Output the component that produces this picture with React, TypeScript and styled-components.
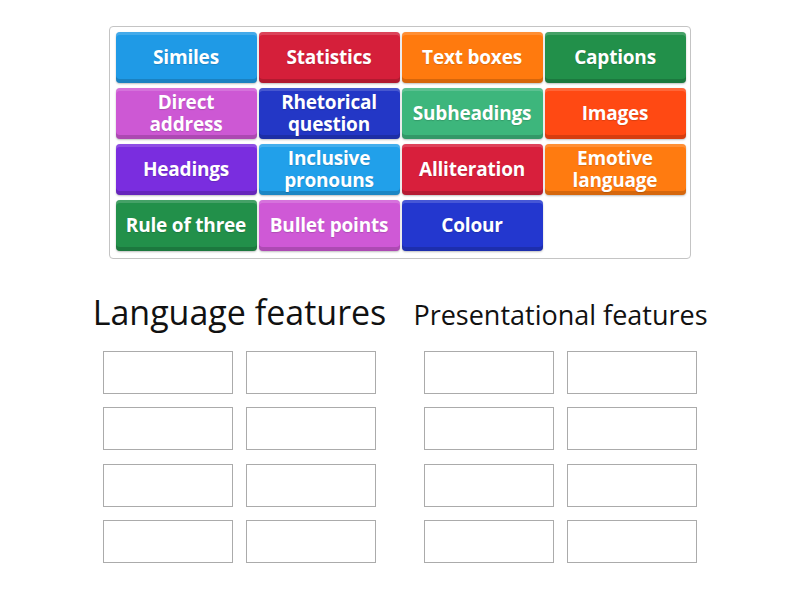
import React from "react";
import styled, { createGlobalStyle } from "styled-components";

const GlobalStyle = createGlobalStyle`
  html, body { margin: 0; padding: 0; background: #ffffff; }
  body { font-family: "Open Sans", "Liberation Sans", sans-serif; }
`;

const Page = styled.div`
  width: 800px;
  height: 600px;
  padding-top: 26px;
  box-sizing: border-box;
  display: flex;
  flex-direction: column;
  align-items: center;
`;

const Bank = styled.div`
  width: 582px;
  margin-left: -1px;
  box-sizing: border-box;
  border: 1px solid #c4c4c4;
  border-radius: 4px;
  padding: 5px 3px 7px 6px;
  display: grid;
  grid-template-columns: repeat(4, 141px);
  grid-auto-rows: 51px;
  column-gap: 2px;
  row-gap: 5px;
`;

const Tile = styled.div<{ $c: string }>`
  background: ${(p) => p.$c};
  border-radius: 4px;
  box-shadow: inset 0 3px 0 rgba(255, 255, 255, 0.16),
    inset 0 -4px 0 rgba(0, 0, 0, 0.16), 0 1px 2px rgba(0, 0, 0, 0.25);
  color: #ffffff;
  font-weight: 700;
  font-size: 19px;
  line-height: 22px;
  letter-spacing: -0.2px;
  text-align: center;
  display: flex;
  align-items: center;
  justify-content: center;
  padding: 0 1px 1px;
  text-shadow: 0 1px 1px rgba(0, 0, 0, 0.15);
  white-space: pre-line;
`;

const Groups = styled.div`
  margin-top: 33px;
  display: grid;
  grid-template-columns: 321px 321px;
`;

const Group = styled.div`
  display: flex;
  flex-direction: column;
  align-items: center;
`;

const Title = styled.div<{ $size: number; $pad: number }>`
  height: 40px;
  font-size: ${(p) => p.$size}px;
  line-height: 40px;
  padding-top: ${(p) => p.$pad}px;
  box-sizing: border-box;
  color: #111111;
  white-space: nowrap;
`;

const Slots = styled.div`
  margin-top: 19px;
  display: grid;
  grid-template-columns: repeat(2, 130px);
  grid-auto-rows: 43px;
  column-gap: 13px;
  row-gap: 13.33px;
`;

const Slot = styled.div`
  border: 1px solid #ababab;
  background: #ffffff;
  box-sizing: border-box;
`;

const tiles: [string, string][] = [
  ["Similes", "#1f9ae6"],
  ["Statistics", "#d51f3a"],
  ["Text boxes", "#ff7a0e"],
  ["Captions", "#22904a"],
  ["Direct\naddress", "#cd58d4"],
  ["Rhetorical\nquestion", "#2337c6"],
  ["Subheadings", "#3db67c"],
  ["Images", "#ff4913"],
  ["Headings", "#7a2ddf"],
  ["Inclusive\npronouns", "#21a0ea"],
  ["Alliteration", "#d81f3c"],
  ["Emotive\nlanguage", "#ff7b10"],
  ["Rule of three", "#22904a"],
  ["Bullet points", "#cf59d6"],
  ["Colour", "#2337cf"],
];

const SlotGroup = () => (
  <Slots>
    {Array.from({ length: 8 }).map((_, i) => (
      <Slot key={i} />
    ))}
  </Slots>
);

export default function App() {
  return (
    <>
      <GlobalStyle />
      <Page>
        <Bank>
          {tiles.map(([t, c]) => (
            <Tile key={t} $c={c}>
              {t}
            </Tile>
          ))}
        </Bank>
        <Groups>
          <Group>
            <Title $size={34} $pad={0}>Language features</Title>
            <SlotGroup />
          </Group>
          <Group>
            <Title $size={27} $pad={3}>Presentational features</Title>
            <SlotGroup />
          </Group>
        </Groups>
      </Page>
    </>
  );
}
